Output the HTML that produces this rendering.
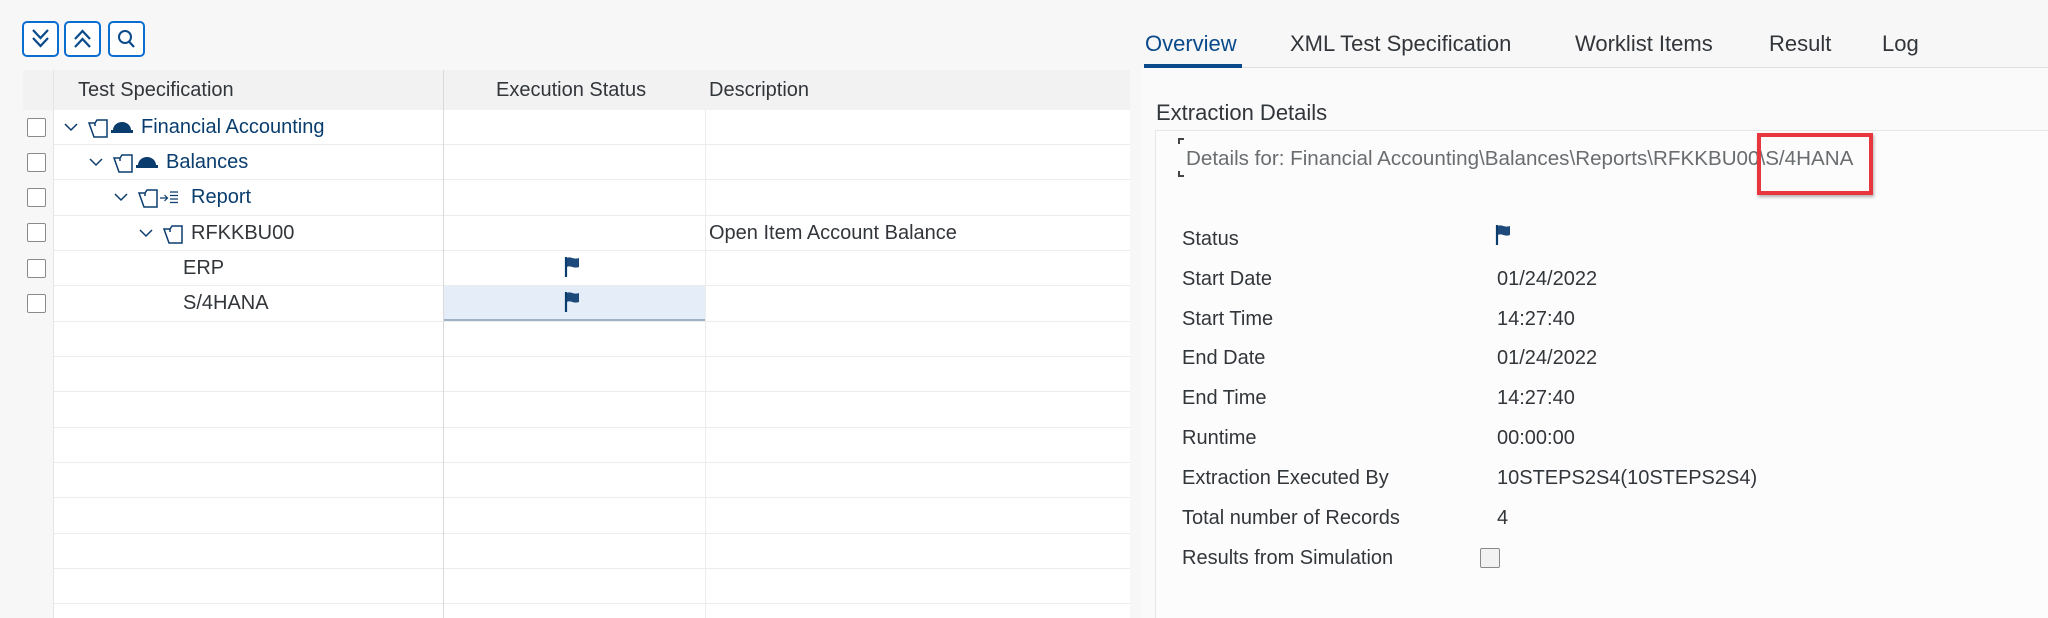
<!DOCTYPE html>
<html><head><meta charset="utf-8"><style>
*{margin:0;padding:0;box-sizing:border-box}
body{width:2048px;height:618px;overflow:hidden;background:#f7f7f7;font-family:"Liberation Sans",sans-serif;color:#32363a;position:relative}
.abs{position:absolute}
.btn{position:absolute;top:21px;width:37px;height:36px;border:2px solid #0a6ed1;border-radius:5px;background:#fff}
.t{position:absolute;font-size:20px;white-space:nowrap;line-height:22px}
.cb{position:absolute;left:27px;width:19px;height:19px;border:1.5px solid #8a8a8a;border-radius:2px;background:#fff}
.blue{color:#0a3d6e}
.flag{position:absolute}
.lbl{position:absolute;left:1182px;font-size:20px;color:#32363a}
.val{position:absolute;left:1497px;font-size:20px;color:#32363a}
.hl{position:absolute;left:23px;width:1107px;height:1px;background:#ececec}
</style></head><body>
<div class="btn" style="left:22px"><svg width="33" height="32" viewBox="0 0 33 32"><path d="M9 7l7.5 8 7.5-8M9 15l7.5 8 7.5-8" fill="none" stroke="#0a4a8a" stroke-width="2.2"/></svg></div>
<div class="btn" style="left:64px"><svg width="33" height="32" viewBox="0 0 33 32"><path d="M9 16l7.5-8 7.5 8M9 24l7.5-8 7.5 8" fill="none" stroke="#0a4a8a" stroke-width="2.2"/></svg></div>
<div class="btn" style="left:108px"><svg width="33" height="32" viewBox="0 0 33 32"><circle cx="15" cy="14" r="6" fill="none" stroke="#0a4a8a" stroke-width="2"/><path d="M19 18.5l5 5.5" stroke="#0a4a8a" stroke-width="2.2"/></svg></div>

<div class="abs" style="left:23px;top:70px;width:1107px;height:40px;background:#f2f2f2"></div>
<div class="t" style="left:78px;top:79px">Test Specification</div>
<div class="t" style="left:496px;top:79px">Execution Status</div>
<div class="t" style="left:709px;top:79px">Description</div>
<div class="abs" style="left:23px;top:110px;width:1107px;height:508px;background:#fff"></div>
<div class="hl" style="top:144px"></div><div class="hl" style="top:179px"></div><div class="hl" style="top:215px"></div>
<div class="hl" style="top:250px"></div><div class="hl" style="top:285px"></div><div class="hl" style="top:321px"></div>
<div class="hl" style="top:356px"></div><div class="hl" style="top:391px"></div><div class="hl" style="top:427px"></div>
<div class="hl" style="top:462px"></div><div class="hl" style="top:497px"></div><div class="hl" style="top:533px"></div>
<div class="hl" style="top:568px"></div><div class="hl" style="top:603px"></div>
<div class="abs" style="left:23px;top:110px;width:30px;height:508px;background:#f7f7f7"></div>
<div class="abs" style="left:53px;top:70px;width:1px;height:548px;background:#e5e5e5"></div>
<div class="abs" style="left:443px;top:70px;width:1px;height:548px;background:#d9d9d9"></div>
<div class="abs" style="left:705px;top:110px;width:1px;height:508px;background:#ececec"></div>
<div class="abs" style="left:444px;top:286px;width:261px;height:35px;background:#e5eef8;border-bottom:2px solid #9fb3c8"></div>

<div class="cb" style="top:118px"></div><div class="cb" style="top:153px"></div><div class="cb" style="top:188px"></div>
<div class="cb" style="top:223px"></div><div class="cb" style="top:259px"></div><div class="cb" style="top:294px"></div>

<svg class="abs" style="left:64px;top:115px" width="80" height="26"><g fill="none" stroke="#0a3d6e" stroke-width="1.5"><path d="M1 9l6 6 6-6"/><path d="M25 8h6l2-3h10v17h-13z M31 8v3"/></g><path d="M49 15a9 8 0 0 1 18 0h2v3h-22v-3z" fill="#0a3d6e"/></svg>
<svg class="abs" style="left:89px;top:150px" width="80" height="26"><g fill="none" stroke="#0a3d6e" stroke-width="1.5"><path d="M1 9l6 6 6-6"/><path d="M25 8h6l2-3h10v17h-13z M31 8v3"/></g><path d="M49 15a9 8 0 0 1 18 0h2v3h-22v-3z" fill="#0a3d6e"/></svg>
<svg class="abs" style="left:114px;top:185px" width="80" height="26"><g fill="none" stroke="#0a3d6e" stroke-width="1.5"><path d="M1 9l6 6 6-6"/><path d="M25 8h6l2-3h10v17h-13z M31 8v3"/><path d="M46 13h7M50.5 10l3 3-3 3" stroke-width="1.2"/><path d="M56 7h8M56 10.5h8M56 14h8M56 17.5h8" stroke-width="1.3"/></g></svg>
<svg class="abs" style="left:139px;top:221px" width="80" height="26"><g fill="none" stroke="#0a3d6e" stroke-width="1.5"><path d="M1 9l6 6 6-6"/><path d="M25 8h6l2-3h10v17h-13z M31 8v3"/></g></svg>

<div class="t blue" style="left:141px;top:116px">Financial Accounting</div>
<div class="t blue" style="left:166px;top:151px">Balances</div>
<div class="t blue" style="left:191px;top:186px">Report</div>
<div class="t" style="left:191px;top:222px">RFKKBU00</div>
<div class="t" style="left:183px;top:257px">ERP</div>
<div class="t" style="left:183px;top:292px">S/4HANA</div>
<div class="t" style="left:709px;top:222px">Open Item Account Balance</div>
<svg class="flag" style="left:564px;top:256px" width="18" height="22" viewBox="0 0 18 22"><path d="M2 1v20" stroke="#0a3d6e" stroke-width="2.2"/><path d="M3 2c4-2 6 2 12 0v9c-6 2-8-2-12 0z" fill="#1d4a7a"/></svg>
<svg class="flag" style="left:564px;top:291px" width="18" height="22" viewBox="0 0 18 22"><path d="M2 1v20" stroke="#0a3d6e" stroke-width="2.2"/><path d="M3 2c4-2 6 2 12 0v9c-6 2-8-2-12 0z" fill="#1d4a7a"/></svg>

<div class="t" style="left:1145px;top:33px;font-size:22px;color:#0a4a8a">Overview</div>
<div class="t" style="left:1290px;top:33px;font-size:22px">XML Test Specification</div>
<div class="t" style="left:1575px;top:33px;font-size:22px">Worklist Items</div>
<div class="t" style="left:1769px;top:33px;font-size:22px">Result</div>
<div class="t" style="left:1882px;top:33px;font-size:22px">Log</div>
<div class="abs" style="left:1144px;top:67px;width:904px;height:1px;background:#e0e0e0"></div>
<div class="abs" style="left:1144px;top:64px;width:98px;height:4px;background:#0a4a8a"></div>
<div class="abs" style="left:1142px;top:68px;width:906px;height:550px;background:#fafafa"></div>
<div class="t" style="left:1156px;top:102px;font-size:22px">Extraction Details</div>
<div class="abs" style="left:1155px;top:130px;width:893px;height:488px;border-left:1px solid #e6e6e6;border-top:1px solid #e6e6e6;background:#fcfcfc"></div>
<div class="abs" style="left:1178px;top:138px;width:6px;height:6px;border-left:2px solid #444;border-top:2px solid #444"></div>
<div class="abs" style="left:1178px;top:171px;width:6px;height:6px;border-left:2px solid #444;border-bottom:2px solid #444"></div>
<div class="t" style="left:1186px;top:148px;color:#6a6d70;font-size:20.6px">Details for: Financial Accounting\Balances\Reports\RFKKBU00\S/4HANA</div>
<div class="abs" style="left:1757px;top:133px;width:116px;height:62px;border:4px solid #e8363e;box-shadow:1px 2px 3px rgba(0,0,0,.3)"></div>

<div class="lbl" style="top:228px">Status</div>
<svg class="abs" style="left:1495px;top:224px" width="18" height="22" viewBox="0 0 18 22"><path d="M2 1v20" stroke="#0a3d6e" stroke-width="2.2"/><path d="M3 2c4-2 6 2 12 0v9c-6 2-8-2-12 0z" fill="#1d4a7a"/></svg>
<div class="lbl" style="top:268px">Start Date</div><div class="val" style="top:268px">01/24/2022</div>
<div class="lbl" style="top:308px">Start Time</div><div class="val" style="top:308px">14:27:40</div>
<div class="lbl" style="top:347px">End Date</div><div class="val" style="top:347px">01/24/2022</div>
<div class="lbl" style="top:387px">End Time</div><div class="val" style="top:387px">14:27:40</div>
<div class="lbl" style="top:427px">Runtime</div><div class="val" style="top:427px">00:00:00</div>
<div class="lbl" style="top:467px">Extraction Executed By</div><div class="val" style="top:467px">10STEPS2S4(10STEPS2S4)</div>
<div class="lbl" style="top:507px">Total number of Records</div><div class="val" style="top:507px">4</div>
<div class="lbl" style="top:547px">Results from Simulation</div>
<div class="abs" style="left:1480px;top:548px;width:20px;height:20px;border:1.5px solid #8a8a8a;border-radius:2px;background:#f2f2f2"></div>
</body></html>
